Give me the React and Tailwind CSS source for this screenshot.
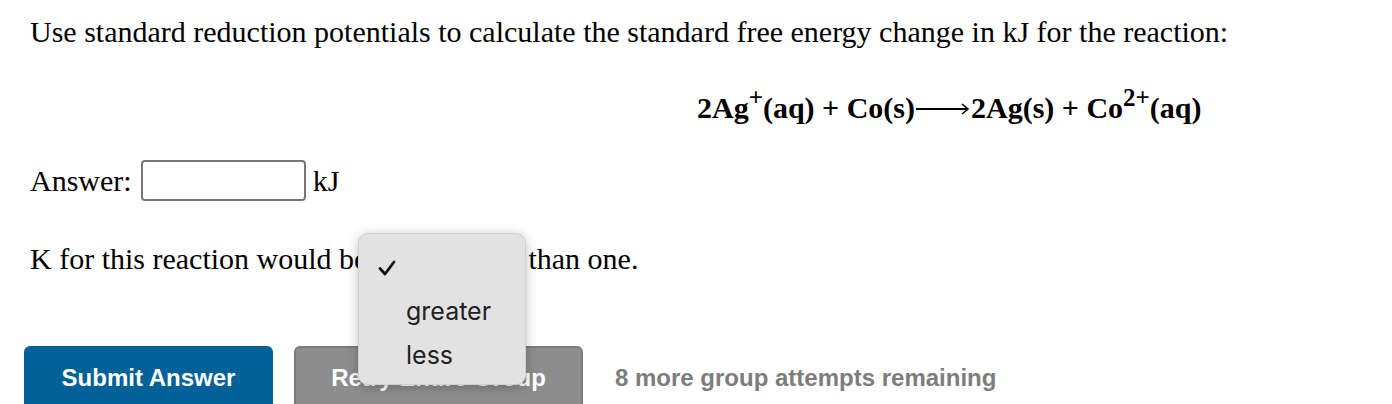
import React from "react";

export default function App() {
  const serif = { fontFamily: '"Liberation Serif", "Times New Roman", serif' };
  return (
    <div className="relative w-[1392px] h-[404px] overflow-hidden bg-white text-black" style={serif}>
      <div className="pl-[30px] pt-[15px]">
        <p className="text-[30px] leading-[34px] whitespace-nowrap">
          Use standard reduction potentials to calculate the standard free energy change in kJ for the reaction:
        </p>
        <div className="mt-[39px] pl-[667px] flex items-center text-[30px] leading-[40px] font-bold whitespace-nowrap">
          <span>2Ag<sup className="text-[25px] top-[-0.5em]">+</sup>(aq) + Co(s)</span>
          <svg width="54" height="14" viewBox="0 0 54 14" className="mx-[1px] mt-[2px]">
            <line x1="0" y1="7" x2="51" y2="7" stroke="#000" strokeWidth="2" />
            <path d="M46 2 L52 7 L46 12" fill="none" stroke="#000" strokeWidth="1.6" />
          </svg>
          <span>2Ag(s) + Co<sup className="text-[25px] top-[-0.5em]">2+</sup>(aq)</span>
        </div>
        <div className="mt-[32px] flex items-center text-[30px] leading-[34px]">
          <span>Answer:</span>
          <input className="ml-[9px] w-[165px] h-[41px] border-2 border-[#767676] rounded-[4px] bg-white outline-none" />
          <span className="ml-[7px]">kJ</span>
        </div>
        <div className="mt-[41px] text-[30px] leading-[34px] flex whitespace-nowrap">
          <span>K for this reaction would be</span>
          <span className="inline-block w-[161px]"></span>
          <span>than one.</span>
        </div>
        <div className="mt-[70px] -ml-[6px] flex items-start gap-[21px]" style={{ fontFamily: '"Liberation Sans", Arial, sans-serif' }}>
          <button className="w-[249px] h-[64px] rounded-[6px] bg-[#03619a] text-white text-[24px] font-bold">
            Submit Answer
          </button>
          <button className="w-[289px] h-[64px] rounded-[6px] bg-[#8d8d8d] border-2 border-[#7b7b7b] text-white text-[24px] font-bold">
            Retry Entire Group
          </button>
          <span className="ml-[11px] mt-[14px] text-[24px] font-bold text-[#7d7d7d] whitespace-nowrap">8 more group attempts remaining</span>
        </div>
      </div>

      <div
        className="absolute left-[358px] top-[233px] w-[168px] h-[152px] rounded-[10px] bg-[#e2e2e2] shadow-[0_2px_12px_rgba(0,0,0,0.25)] border border-[#d0d0d0]"
        style={{ fontFamily: 'Inter, "Noto Sans", sans-serif' }}
      >
        <div className="h-[55px] flex items-center pl-[19px] pt-[12px]">
          <svg width="18" height="16" viewBox="0 0 18 16">
            <path d="M2 8.5 L7 14 L16 2" fill="none" stroke="#111" strokeWidth="2.8" strokeLinecap="round" strokeLinejoin="round" />
          </svg>
        </div>
        <div className="pl-[47px] text-[25px] leading-[44px] text-[#222]">greater</div>
        <div className="pl-[47px] text-[25px] leading-[44px] text-[#222]">less</div>
      </div>
    </div>
  );
}
